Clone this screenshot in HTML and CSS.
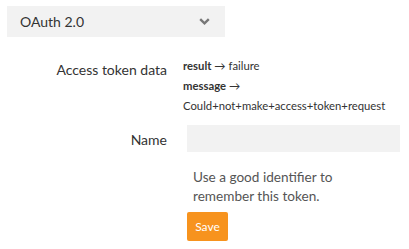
FILE: index.html
```html
<!DOCTYPE html>
<html>
<head>
<meta charset="utf-8">
<link rel="stylesheet" href="styles.css">
</head>
<body>
<div class="page">
  <div class="select">
    <span class="select-text">OAuth 2.0</span>
    <svg class="chevron" width="11" height="7" viewBox="0 0 11 7"><path d="M1.2 1.2 L5.5 5.3 L9.8 1.2" fill="none" stroke="#777" stroke-width="2.4"/></svg>
  </div>
  <div class="row row-data">
    <div class="label">Access token data</div>
    <div class="data">
      <div class="data-line"><b>result</b> → failure</div>
      <div class="data-line"><b>message</b> →</div>
      <div class="data-line">Could+not+make+access+token+request</div>
    </div>
  </div>
  <div class="row row-name">
    <div class="label">Name</div>
    <div class="field">
      <div class="input"></div>
      <p class="help">Use a good identifier to remember this token.</p>
      <button class="save">Save</button>
    </div>
  </div>
</div>
</body>
</html>
```
FILE: styles.css
```css
html, body { margin: 0; padding: 0; background: #fff; }
body { font-family: Lato, "Open Sans", sans-serif; color: #333; }
.page { padding: 6px 0 0 7px; }
.select {
  width: 218px; height: 31px; box-sizing: border-box;
  background: #f2f2f2;
  display: flex; align-items: center; justify-content: space-between;
  padding: 0 15px 0 13px;
}
.select-text { font-size: 14px; color: #333; }
.chevron { display: block; }
.row { display: flex; }
.label {
  width: 160px; text-align: right; font-size: 14px; color: #333;
}
.row-data { margin-top: 19px; }
.row-data .label { padding-top: 5px; }
.data { margin-left: 16px; font-size: 11.3px; color: #333; }
.data-line { line-height: 20px; }
.data b { font-weight: 700; }
.row-name { margin-top: 9px; }
.row-name .label { padding-top: 6px; }
.field { margin-left: 20px; width: 213px; }
.input { height: 27px; background: #f2f2f2; }
.help {
  margin: 16px 0 0 6px; font-size: 13.6px; line-height: 19px; color: #555; width: 150px;
}
.save {
  margin-top: 6px; width: 41px; height: 29px;
  background: #f7931e; color: #fff; border: 0; border-radius: 2px;
  font-family: Lato, sans-serif; font-size: 12px; padding: 0;
}
```
